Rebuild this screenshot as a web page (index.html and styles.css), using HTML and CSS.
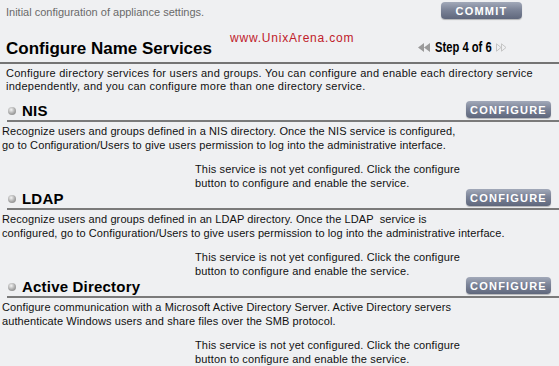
FILE: index.html
```html
<!DOCTYPE html>
<html>
<head>
<meta charset="utf-8">
<link rel="stylesheet" href="styles.css">
</head>
<body>
<div class="page">
  <div class="topbar">
    <span class="intro">Initial configuration of appliance settings.</span>
    <span class="btn commit">COMMIT</span>
  </div>
  <div class="titlebar">
    <h1 class="title">Configure Name Services</h1>
    <span class="watermark">www.UnixArena.com</span>
    <span class="step">
      <svg class="arrow" width="12" height="9" viewBox="0 0 12 9"><path d="M6 0 L0 4.5 L6 9 Z M12 0 L6 4.5 L12 9 Z" fill="#9a9a9a"/></svg>
      <span class="step-text">Step 4 of 6</span>
      <svg class="arrow" width="11" height="9" viewBox="0 0 11 9"><path d="M0.5 0.8 L5 4.5 L0.5 8.2 Z M5.5 0.8 L10 4.5 L5.5 8.2 Z" fill="none" stroke="#c4c4c4" stroke-width="1"/></svg>
    </span>
  </div>
  <p class="desc">Configure directory services for users and groups. You can configure and enable each directory service<br>independently, and you can configure more than one directory service.</p>

  <div class="section first">
    <div class="sec-head">
      <span class="dot"></span>
      <h2 class="sec-title">NIS</h2>
      <span class="btn configure">CONFIGURE</span>
    </div>
    <p class="sec-desc">Recognize users and groups defined in a NIS directory. Once the NIS service is configured,<br>go to Configuration/Users to give users permission to log into the administrative interface.</p>
    <p class="status">This service is not yet configured. Click the configure<br>button to configure and enable the service.</p>
  </div>

  <div class="section">
    <div class="sec-head">
      <span class="dot"></span>
      <h2 class="sec-title">LDAP</h2>
      <span class="btn configure">CONFIGURE</span>
    </div>
    <p class="sec-desc">Recognize users and groups defined in an LDAP directory. Once the LDAP &nbsp;service is<br>configured, go to Configuration/Users to give users permission to log into the administrative interface.</p>
    <p class="status">This service is not yet configured. Click the configure<br>button to configure and enable the service.</p>
  </div>

  <div class="section last">
    <div class="sec-head">
      <span class="dot"></span>
      <h2 class="sec-title">Active Directory</h2>
      <span class="btn configure">CONFIGURE</span>
    </div>
    <p class="sec-desc">Configure communication with a Microsoft Active Directory Server. Active Directory servers<br>authenticate Windows users and share files over the SMB protocol.</p>
    <p class="status">This service is not yet configured. Click the configure<br>button to configure and enable the service.</p>
  </div>
</div>
</body>
</html>
```

FILE: styles.css
```css
html, body {
  margin: 0;
  padding: 0;
  background: #eff0f2;
}
body {
  font-family: "Liberation Sans", Arial, sans-serif;
  color: #111;
  font-size: 11px;
  letter-spacing: 0.15px;
  width: 559px;
  height: 366px;
  overflow: hidden;
}
.page {
  display: flex;
  flex-direction: column;
}
.topbar {
  display: flex;
  justify-content: space-between;
  align-items: flex-start;
  padding: 2px 37px 0 6px;
  box-sizing: border-box;
  height: 30px;
}
.intro {
  color: #6a6a6a;
  font-size: 11px;
  letter-spacing: 0;
  margin-top: 4px;
}
.btn {
  display: inline-flex;
  align-items: center;
  justify-content: center;
  flex: none;
  height: 17px;
  border-radius: 4px;
  background: linear-gradient(#a2a9b9, #7c8498 45%, #5f677c);
  color: #fff;
  font-weight: bold;
  font-size: 11px;
  letter-spacing: 1.2px;
  box-shadow: 0 1px 1px rgba(0,0,0,0.25);
}
.commit {
  width: 81px;
}
.configure {
  width: 85px;
  margin-left: auto;
  align-self: flex-start;
}
.titlebar {
  display: flex;
  align-items: flex-end;
  border-bottom: 2px solid #747474;
  padding: 0 0 3px 6px;
  box-sizing: border-box;
  height: 34px;
}
.title {
  margin: 0;
  font-size: 17px;
  line-height: 20px;
  font-weight: bold;
  letter-spacing: 0;
  color: #000;
}
.watermark {
  color: #c0202a;
  font-size: 12px;
  align-self: flex-start;
  margin: 1px 0 0 18px;
  letter-spacing: 0.8px;
}
.step {
  display: flex;
  align-items: center;
  margin-left: auto;
  margin-right: 52px;
  margin-bottom: 4px;
}
.step-text {
  display: inline-block;
  font-weight: bold;
  font-size: 14px;
  letter-spacing: 0;
  color: #000;
  transform: scaleX(0.8);
  transform-origin: left center;
  margin: 0 -10px 0 5px;
}
.desc {
  margin: 3px 0 0 6px;
  line-height: 13px;
  white-space: nowrap;
  letter-spacing: 0.25px;
}
.section {
  display: flex;
  flex-direction: column;
  height: 88px;
  flex: none;
}
.section.first {
  margin-top: 8px;
}
.sec-head {
  display: flex;
  align-items: center;
  height: 19px;
  margin-left: 7px;
  border-bottom: 2px solid #7a7a7a;
  padding-right: 8px;
  flex: none;
}
.dot {
  width: 8px;
  height: 8px;
  border-radius: 50%;
  background: radial-gradient(circle at 40% 35%, #f4f4f4, #a8a8a8 55%, #7a7a7a);
  margin: 0 6px 0 1px;
}
.sec-title {
  margin: 0;
  font-size: 15px;
  font-weight: bold;
  letter-spacing: 0.2px;
  color: #000;
}
.sec-desc {
  margin: 2px 0 0 2px;
  line-height: 14px;
  white-space: nowrap;
  letter-spacing: 0.1px;
}
.status {
  margin: 10px 0 0 195px;
  line-height: 14px;
  white-space: nowrap;
}
```
